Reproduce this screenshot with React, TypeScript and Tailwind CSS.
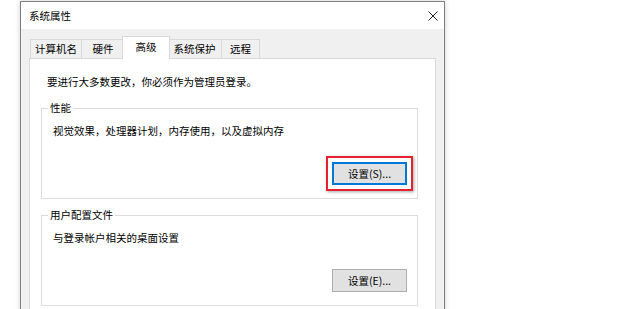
import React from 'react';

const tabs = [
  { label: '计算机名', width: 'w-[52px]', ml: '' },
  { label: '硬件', width: 'w-[44px]', ml: '-ml-px' },
  { label: '高级', width: 'w-[48px]', ml: '-ml-[3px]', active: true },
  { label: '系统保护', width: 'w-[55px]', ml: '-ml-[3px]' },
  { label: '远程', width: 'w-[39px]', ml: '-ml-px' },
];

function Group({
  title,
  text,
  button,
  focused,
  className,
}: {
  title: string;
  text: string;
  button: string;
  focused?: boolean;
  className?: string;
}) {
  return (
    <fieldset className={`w-[377px] border border-[#dcdcdc] ${className ?? ''}`}>
      <legend className="ml-[6px] px-[2px] leading-[16px]">{title}</legend>
      <div className="pl-[11px] pr-[10px] pt-[7px] pb-[13px]">
        <div className="leading-[16px]">{text}</div>
        <div className="mt-[23px] flex justify-end">
          <div className="relative">
            {focused && (
              <div className="absolute -inset-[6px] border-2 border-[#e3212f] shadow-[1px_1px_3px_rgba(0,0,0,0.35)]" />
            )}
            <button
              className={`flex h-[23px] w-[75px] items-center justify-center bg-[#e1e1e1] leading-[16px] text-black ${
                focused ? 'border-2 border-[#0078d7]' : 'border border-[#adadad]'
              }`}
            >
              {button}
            </button>
          </div>
        </div>
      </div>
    </fieldset>
  );
}

export default function App() {
  return (
    <div
      className="h-[309px] w-[620px] overflow-hidden bg-white pl-[20px] pt-px text-[10.5px] text-black"
      style={{ fontFamily: '"Noto Sans CJK SC", "Noto Sans", sans-serif' }}
    >
      <div className="h-[330px] w-[425px] border border-[#7f7f7f] bg-[#f0f0f0] shadow-[0_0_5px_rgba(0,0,0,0.2)]">
        {/* 标题栏 */}
        <div className="flex h-[27px] items-center justify-between bg-white pl-[8px] pr-[6px]">
          <span className="leading-[16px]">系统属性</span>
          <svg width="10" height="10" viewBox="0 0 10 10" className="text-[#222]">
            <path d="M0.5 0.5 L9.5 9.5 M9.5 0.5 L0.5 9.5" stroke="currentColor" strokeWidth="1" />
          </svg>
        </div>

        <div className="px-[8px] pt-[7px]">
          {/* 选项卡 */}
          <div className="flex h-[22px] items-end pl-px">
            {tabs.map((t) => (
              <div
                key={t.label}
                className={`${t.width} ${t.ml} flex items-center justify-center border border-b-0 border-[#d9d9d9] leading-[16px] ${
                  t.active
                    ? 'relative z-10 -mb-px h-[23px] bg-white pb-[2px]'
                    : 'h-[19px] bg-[#f0f0f0]'
                }`}
              >
                {t.label}
              </div>
            ))}
          </div>

          {/* 面板 */}
          <div className="h-[300px] border border-[#d9d9d9] bg-white pl-[11px] pt-[15px]">
            <div className="ml-[6px] leading-[16px]">要进行大多数更改，你必须作为管理员登录。</div>
            <Group
              className="mt-[10px]"
              title="性能"
              text="视觉效果，处理器计划，内存使用，以及虚拟内存"
              button="设置(S)..."
              focused
            />
            <Group
              className="mt-[8px]"
              title="用户配置文件"
              text="与登录帐户相关的桌面设置"
              button="设置(E)..."
            />
          </div>
        </div>
      </div>
    </div>
  );
}
